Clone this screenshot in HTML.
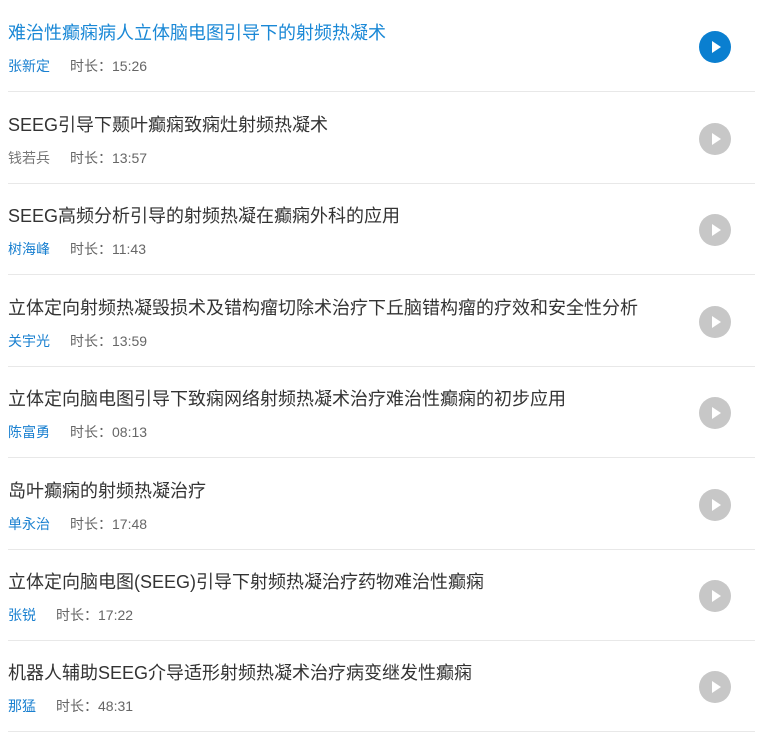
<!DOCTYPE html>
<html><head><meta charset="utf-8"><style>
body{margin:0;background:#fff;width:773px;height:745px;overflow:hidden;font-family:"Liberation Sans","Noto Sans CJK SC",sans-serif}
.r{position:absolute;left:8px;width:747px;height:91px;border-bottom:1px solid #e8e8e8}
.t{position:absolute;left:0;top:20px;font-size:18px;line-height:26px;color:#333;white-space:nowrap}
.m{position:absolute;left:0;top:56px;font-size:14px;line-height:20px;color:#666;white-space:nowrap}
.m b{font-weight:normal;color:#1a80d0;margin-right:20px}
.m b.g{color:#777}
.p{position:absolute;left:691px;top:31px;width:32px;height:32px;border-radius:50%;background:#c7c7c7}
.p:after{content:"";position:absolute;left:13px;top:10px;border-left:9px solid #fff;border-top:6px solid transparent;border-bottom:6px solid transparent}
.a .t{color:#1a88d6}.a .p{background:#0a7fd0}
</style></head><body>
<div class="r a" style="top:0"><div class="t">难治性癫痫病人立体脑电图引导下的射频热凝术</div><div class="m"><b>张新定</b>时长：15:26</div><div class="p"></div></div>
<div class="r" style="top:92px"><div class="t">SEEG引导下颞叶癫痫致痫灶射频热凝术</div><div class="m"><b class="g">钱若兵</b>时长：13:57</div><div class="p"></div></div>
<div class="r" style="top:183px"><div class="t">SEEG高频分析引导的射频热凝在癫痫外科的应用</div><div class="m"><b>树海峰</b>时长：11:43</div><div class="p"></div></div>
<div class="r" style="top:275px"><div class="t">立体定向射频热凝毁损术及错构瘤切除术治疗下丘脑错构瘤的疗效和安全性分析</div><div class="m"><b>关宇光</b>时长：13:59</div><div class="p"></div></div>
<div class="r" style="top:366px"><div class="t">立体定向脑电图引导下致痫网络射频热凝术治疗难治性癫痫的初步应用</div><div class="m"><b>陈富勇</b>时长：08:13</div><div class="p"></div></div>
<div class="r" style="top:458px"><div class="t">岛叶癫痫的射频热凝治疗</div><div class="m"><b>单永治</b>时长：17:48</div><div class="p"></div></div>
<div class="r" style="top:549px"><div class="t">立体定向脑电图(SEEG)引导下射频热凝治疗药物难治性癫痫</div><div class="m"><b>张锐</b>时长：17:22</div><div class="p"></div></div>
<div class="r" style="top:640px"><div class="t">机器人辅助SEEG介导适形射频热凝术治疗病变继发性癫痫</div><div class="m"><b>那猛</b>时长：48:31</div><div class="p"></div></div>
</body></html>
